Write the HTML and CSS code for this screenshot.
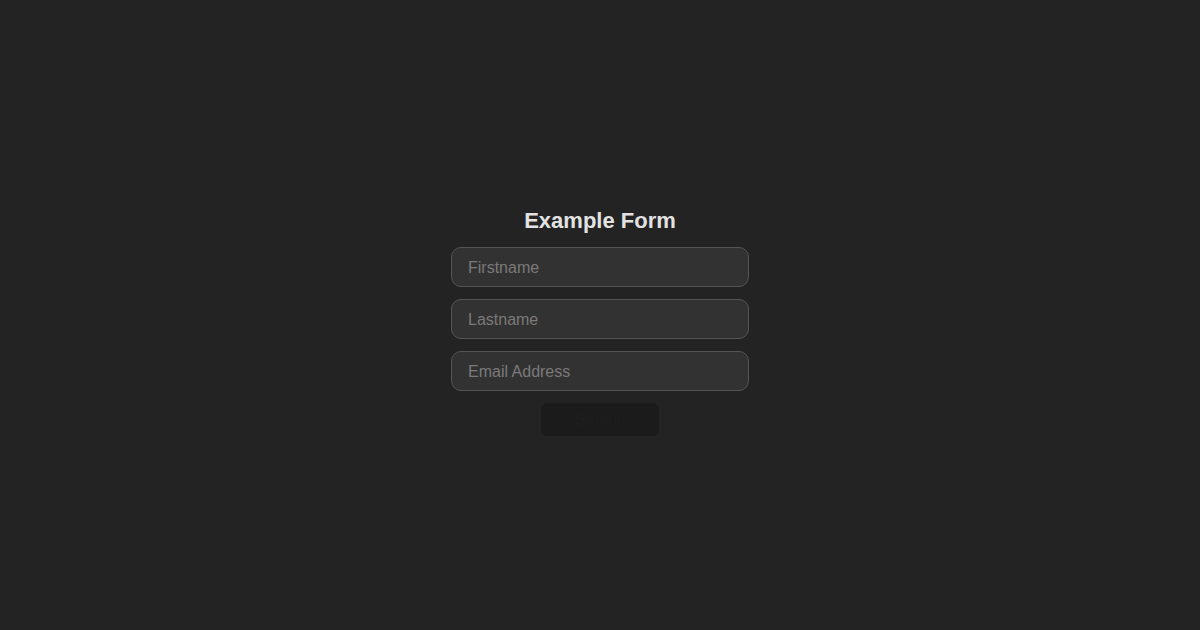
FILE: index.html
```html
<!DOCTYPE html>
<html lang="en">
<head>
    <meta charset="UTF-8">
    <meta name="viewport" content="width=device-width, initial-scale=1.0">
    <title>Example Form</title>
    <link rel="stylesheet" href="styles.css">
</head>
<body>
    <form class="example-form">
        <h2 class="form-title">Example Form</h2>
        <input type="text" class="form-input" placeholder="Firstname">
        <input type="text" class="form-input" placeholder="Lastname">
        <input type="email" class="form-input" placeholder="Email Address">
        <button type="button" class="form-submit">Submit</button>
    </form>
</body>
</html>
```

FILE: styles.css
```css
html, body {
    height: 100%;
}
body {
    margin: 0;
    background-color: #232323;
    font-family: "Liberation Sans", Arial, sans-serif;
    display: flex;
    justify-content: center;
}
.example-form {
    width: 298px;
    margin-top: 208px;
    display: flex;
    flex-direction: column;
    align-items: center;
}
.form-title {
    margin: 0 0 14px;
    height: 25px;
    line-height: 25px;
    font-size: 22px;
    font-weight: bold;
    color: #e2e2e2;
}
.form-input {
    box-sizing: border-box;
    width: 100%;
    height: 40px;
    margin-bottom: 12px;
    padding: 1px 16px 0;
    font-family: "Liberation Sans", Arial, sans-serif;
    font-size: 16px;
    color: #ddd;
    background-color: #323232;
    border: 1px solid #555;
    border-radius: 10px;
    outline: none;
}
.form-input::placeholder {
    color: #7a7a7a;
}
.form-submit {
    width: 118px;
    height: 33px;
    border: none;
    border-radius: 6px;
    background-color: #1b1b1b;
    color: #1e1e1e;
    font-family: "Liberation Sans", Arial, sans-serif;
    font-size: 16px;
    cursor: pointer;
}
```
